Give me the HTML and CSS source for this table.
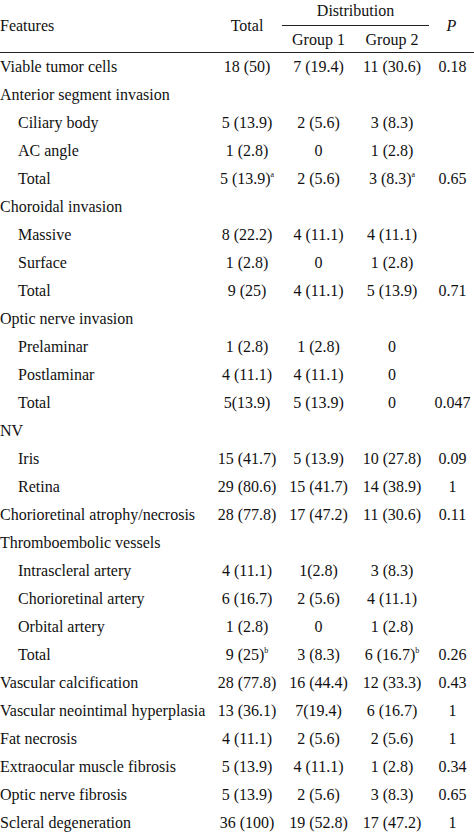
FILE: index.html
```html
<!DOCTYPE html>
<html>
<head>
<meta charset="utf-8">
<link rel="stylesheet" href="styles.css">
</head>
<body>
<table class="tbl">
  <colgroup>
    <col class="c-feat"><col class="c-total"><col class="c-g1"><col class="c-g2"><col class="c-p">
  </colgroup>
  <thead>
    <tr class="h1">
      <th class="feat" rowspan="2">Features</th>
      <th rowspan="2">Total</th>
      <th class="dist" colspan="2"><span>Distribution</span></th>
      <th rowspan="2"><i>P</i></th>
    </tr>
    <tr class="h2">
      <th>Group 1</th>
      <th>Group 2</th>
    </tr>
  </thead>
  <tbody>
    <tr><td>Viable tumor cells</td><td>18 (50)</td><td>7 (19.4)</td><td>11 (30.6)</td><td>0.18</td></tr>
    <tr><td>Anterior segment invasion</td><td></td><td></td><td></td><td></td></tr>
    <tr><td class="sub">Ciliary body</td><td>5 (13.9)</td><td>2 (5.6)</td><td>3 (8.3)</td><td></td></tr>
    <tr><td class="sub">AC angle</td><td>1 (2.8)</td><td>0</td><td>1 (2.8)</td><td></td></tr>
    <tr><td class="sub">Total</td><td>5 (13.9)<sup>a</sup></td><td>2 (5.6)</td><td>3 (8.3)<sup>a</sup></td><td>0.65</td></tr>
    <tr><td>Choroidal invasion</td><td></td><td></td><td></td><td></td></tr>
    <tr><td class="sub">Massive</td><td>8 (22.2)</td><td>4 (11.1)</td><td>4 (11.1)</td><td></td></tr>
    <tr><td class="sub">Surface</td><td>1 (2.8)</td><td>0</td><td>1 (2.8)</td><td></td></tr>
    <tr><td class="sub">Total</td><td>9 (25)</td><td>4 (11.1)</td><td>5 (13.9)</td><td>0.71</td></tr>
    <tr><td>Optic nerve invasion</td><td></td><td></td><td></td><td></td></tr>
    <tr><td class="sub">Prelaminar</td><td>1 (2.8)</td><td>1 (2.8)</td><td>0</td><td></td></tr>
    <tr><td class="sub">Postlaminar</td><td>4 (11.1)</td><td>4 (11.1)</td><td>0</td><td></td></tr>
    <tr><td class="sub">Total</td><td>5(13.9)</td><td>5 (13.9)</td><td>0</td><td>0.047</td></tr>
    <tr><td>NV</td><td></td><td></td><td></td><td></td></tr>
    <tr><td class="sub">Iris</td><td>15 (41.7)</td><td>5 (13.9)</td><td>10 (27.8)</td><td>0.09</td></tr>
    <tr><td class="sub">Retina</td><td>29 (80.6)</td><td>15 (41.7)</td><td>14 (38.9)</td><td>1</td></tr>
    <tr><td>Chorioretinal atrophy/necrosis</td><td>28 (77.8)</td><td>17 (47.2)</td><td>11 (30.6)</td><td>0.11</td></tr>
    <tr><td>Thromboembolic vessels</td><td></td><td></td><td></td><td></td></tr>
    <tr><td class="sub">Intrascleral artery</td><td>4 (11.1)</td><td>1(2.8)</td><td>3 (8.3)</td><td></td></tr>
    <tr><td class="sub">Chorioretinal artery</td><td>6 (16.7)</td><td>2 (5.6)</td><td>4 (11.1)</td><td></td></tr>
    <tr><td class="sub">Orbital artery</td><td>1 (2.8)</td><td>0</td><td>1 (2.8)</td><td></td></tr>
    <tr><td class="sub">Total</td><td>9 (25)<sup>b</sup></td><td>3 (8.3)</td><td>6 (16.7)<sup>b</sup></td><td>0.26</td></tr>
    <tr><td>Vascular calcification</td><td>28 (77.8)</td><td>16 (44.4)</td><td>12 (33.3)</td><td>0.43</td></tr>
    <tr><td>Vascular neointimal hyperplasia</td><td>13 (36.1)</td><td>7(19.4)</td><td>6 (16.7)</td><td>1</td></tr>
    <tr><td>Fat necrosis</td><td>4 (11.1)</td><td>2 (5.6)</td><td>2 (5.6)</td><td>1</td></tr>
    <tr><td>Extraocular muscle fibrosis</td><td>5 (13.9)</td><td>4 (11.1)</td><td>1 (2.8)</td><td>0.34</td></tr>
    <tr><td>Optic nerve fibrosis</td><td>5 (13.9)</td><td>2 (5.6)</td><td>3 (8.3)</td><td>0.65</td></tr>
    <tr><td>Scleral degeneration</td><td>36 (100)</td><td>19 (52.8)</td><td>17 (47.2)</td><td>1</td></tr>
  </tbody>
</table>
</body>
</html>
```

FILE: styles.css
```css
html, body {
  margin: 0;
  padding: 0;
  background: #ffffff;
}

.tbl {
  width: 474px;
  table-layout: fixed;
  border-collapse: separate;
  border-spacing: 0;
  font-family: "Liberation Serif", "Times New Roman", serif;
  font-size: 16px;
  color: #111111;
}

.c-feat { width: 212px; }
.c-total { width: 70px; }
.c-g1 { width: 73px; }
.c-g2 { width: 74px; }
.c-p { width: 45px; }

.tbl th {
  font-weight: normal;
  text-align: center;
  padding: 0;
  white-space: nowrap;
  line-height: 1;
}

.tbl th.feat {
  text-align: left;
}

.h1 th[rowspan] {
  border-bottom: 1px solid #222;
  height: 53px;
  box-sizing: border-box;
}

.h1 th.dist {
  height: 26px;
  box-sizing: border-box;
  border-bottom: 1px solid #222;
  padding-bottom: 3px;
}

.h2 th {
  height: 27px;
  box-sizing: border-box;
  border-bottom: 1px solid #222;
  padding-top: 1px;
}

.tbl i {
  font-style: italic;
}

.tbl td {
  height: 28px;
  padding: 0;
  text-align: center;
  white-space: nowrap;
  box-sizing: border-box;
  line-height: 1;
}

.tbl td:first-child {
  text-align: left;
}

.tbl td.sub {
  padding-left: 18px;
}

.tbl td:last-child {
  padding-left: 2px;
}

.tbl sup {
  font-size: 8px;
  vertical-align: 7px;
  line-height: 0;
}
```
